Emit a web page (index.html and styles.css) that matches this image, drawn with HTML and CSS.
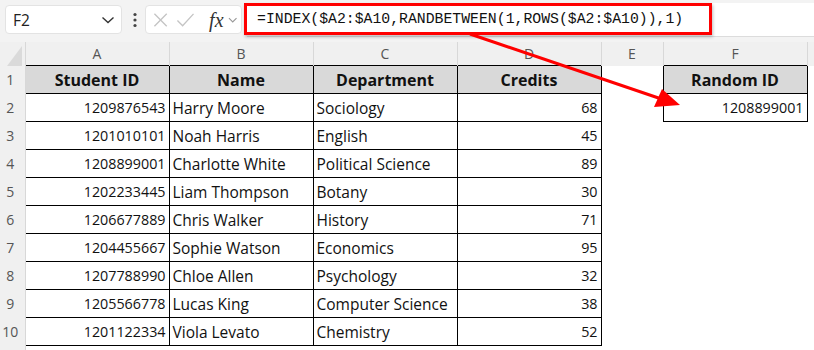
FILE: index.html
```html
<!DOCTYPE html>
<html>
<head>
<meta charset="utf-8">
<link rel="stylesheet" href="styles.css">
</head>
<body>
<div class="app">
  <div class="toolbar">
    <div class="namebox">
      <span class="cellref">F2</span>
      <svg class="chev" width="14" height="8" viewBox="0 0 14 8"><path d="M1.5 1.5 L7 6.5 L12.5 1.5" fill="none" stroke="#333" stroke-width="1.4"/></svg>
    </div>
    <svg class="dots" width="6" height="16" viewBox="0 0 6 16"><circle cx="3" cy="2.5" r="1.6" fill="#444"/><circle cx="3" cy="8" r="1.6" fill="#444"/><circle cx="3" cy="13.5" r="1.6" fill="#444"/></svg>
    <div class="fxbox">
      <svg class="ico" width="16" height="16" viewBox="0 0 16 16"><path d="M1.5 1.5 L14.5 14.5 M14.5 1.5 L1.5 14.5" stroke="#c4c4c4" stroke-width="1.4" fill="none"/></svg>
      <svg class="ico" width="20" height="16" viewBox="0 0 20 16"><path d="M1.5 8.5 L7 14 L18.5 1.5" stroke="#c4c4c4" stroke-width="1.4" fill="none"/></svg>
      <span class="fx">fx</span>
      <svg class="chev-sm" width="10" height="6" viewBox="0 0 10 6"><path d="M1 1 L5 5 L9 1" fill="none" stroke="#999" stroke-width="1.2"/></svg>
    </div>
    <div class="formula">
      <div class="formula-box">=INDEX($A2:$A10,RANDBETWEEN(1,ROWS($A2:$A10)),1)</div>
    </div>
  </div>
  <table class="sheet">
    <colgroup>
      <col class="c-rh"><col class="c-w"><col class="c-w"><col class="c-w"><col class="c-w"><col class="c-e"><col class="c-w"><col class="c-rest">
    </colgroup>
    <thead>
      <tr class="colhead">
        <th class="corner"></th><th>A</th><th>B</th><th>C</th><th>D</th><th>E</th><th>F</th><th></th>
      </tr>
    </thead>
    <tbody>
      <tr><th class="rh">1</th><td class="hd">Student ID</td><td class="hd">Name</td><td class="hd">Department</td><td class="hd">Credits</td><td class="blank"></td><td class="hd">Random ID</td><td class="blank"></td></tr>
      <tr><th class="rh">2</th><td class="num">1209876543</td><td class="txt">Harry Moore</td><td class="txt">Sociology</td><td class="num">68</td><td class="blank"></td><td class="num">1208899001</td><td class="blank"></td></tr>
      <tr><th class="rh">3</th><td class="num">1201010101</td><td class="txt">Noah Harris</td><td class="txt">English</td><td class="num">45</td><td class="blank"></td><td class="blank"></td><td class="blank"></td></tr>
      <tr><th class="rh">4</th><td class="num">1208899001</td><td class="txt">Charlotte White</td><td class="txt">Political Science</td><td class="num">89</td><td class="blank"></td><td class="blank"></td><td class="blank"></td></tr>
      <tr><th class="rh">5</th><td class="num">1202233445</td><td class="txt">Liam Thompson</td><td class="txt">Botany</td><td class="num">30</td><td class="blank"></td><td class="blank"></td><td class="blank"></td></tr>
      <tr><th class="rh">6</th><td class="num">1206677889</td><td class="txt">Chris Walker</td><td class="txt">History</td><td class="num">71</td><td class="blank"></td><td class="blank"></td><td class="blank"></td></tr>
      <tr><th class="rh">7</th><td class="num">1204455667</td><td class="txt">Sophie Watson</td><td class="txt">Economics</td><td class="num">95</td><td class="blank"></td><td class="blank"></td><td class="blank"></td></tr>
      <tr><th class="rh">8</th><td class="num">1207788990</td><td class="txt">Chloe Allen</td><td class="txt">Psychology</td><td class="num">32</td><td class="blank"></td><td class="blank"></td><td class="blank"></td></tr>
      <tr><th class="rh">9</th><td class="num">1205566778</td><td class="txt">Lucas King</td><td class="txt">Computer Science</td><td class="num">38</td><td class="blank"></td><td class="blank"></td><td class="blank"></td></tr>
      <tr><th class="rh">10</th><td class="num">1201122334</td><td class="txt">Viola Levato</td><td class="txt">Chemistry</td><td class="num">52</td><td class="blank"></td><td class="blank"></td><td class="blank"></td></tr>
      <tr><th class="rh"></th><td class="blank"></td><td class="blank"></td><td class="blank"></td><td class="blank"></td><td class="blank"></td><td class="blank"></td><td class="blank"></td></tr>
    </tbody>
  </table>
  <svg class="arrow" width="814" height="350" viewBox="0 0 814 350">
    <line x1="470" y1="34" x2="660" y2="98.5" stroke="#f00" stroke-width="3"/>
    <polygon points="680,105 654,107 662,89" fill="#f00"/>
  </svg>
</div>
</body>
</html>
```
FILE: styles.css
```css
html, body {
  margin: 0;
  padding: 0;
  background: #fff;
}
body {
  width: 814px;
  height: 350px;
  overflow: hidden;
}
.app {
  position: relative;
  width: 814px;
  height: 350px;
  overflow: hidden;
  font-family: "Open Sans", "Liberation Sans", sans-serif;
}
.toolbar {
  height: 42px;
  background: #f3f3f3;
  display: flex;
  align-items: flex-start;
  box-sizing: border-box;
  padding-top: 5px;
}
.namebox {
  margin-left: 5px;
  width: 117px;
  height: 29px;
  box-sizing: border-box;
  background: #fff;
  border: 1px solid #e3e3e3;
  border-radius: 4px;
  display: flex;
  align-items: center;
  justify-content: space-between;
  padding: 0 6px 0 7px;
}
.cellref {
  font-family: "Open Sans", "Liberation Sans", sans-serif;
  font-size: 15.5px;
  color: #222;
}
.dots {
  margin: 7px 0 0 10px;
}
.fxbox {
  margin-left: 7px;
  width: 97px;
  height: 29px;
  box-sizing: border-box;
  background: #fff;
  border: 1px solid #e3e3e3;
  border-radius: 4px;
  display: flex;
  align-items: center;
  padding: 0 4px 0 7px;
  gap: 8px;
}
.fx {
  font-family: "Liberation Serif", serif;
  font-style: italic;
  font-size: 20px;
  color: #333;
  margin-left: 6px;
  line-height: 1;
}
.chev-sm {
  margin-left: -4px;
}
.formula {
  margin-left: 5px;
  margin-top: -2px;
  flex: 1;
  height: 33px;
  background: #fff;
  border-bottom: 1px solid #dcdcdc;
}
.formula-box {
  width: 468px;
  height: 32px;
  box-sizing: border-box;
  border: 3px solid #f00;
  margin-left: -3px;
  padding-left: 10px;
  font-family: "Liberation Mono", monospace;
  font-size: 14.8px;
  line-height: 26px;
  color: #111;
  box-shadow: 1px 2px 3px rgba(0,0,0,0.25);
  white-space: nowrap;
}
.sheet {
  border-collapse: collapse;
  table-layout: fixed;
  width: 814px;
}
.c-rh { width: 25px; }
.c-w { width: 144px; }
.c-e { width: 62px; }
.c-rest { width: 7px; }
.colhead th {
  height: 23px;
  padding: 0;
  background: #f0f0f0;
  border-right: 1px solid #d8d8d8;
  font-weight: 400;
  font-size: 14px;
  color: #555;
  text-align: center;
  vertical-align: middle;
  font-family: "Open Sans", "Liberation Sans", sans-serif;
}
.corner {
  position: relative;
}
.corner::after {
  content: "";
  position: absolute;
  right: 3px;
  bottom: 0;
  width: 0;
  height: 0;
  border-left: 15px solid transparent;
  border-bottom: 20px solid #dadada;
}
tbody tr {
  height: 28px;
}
.rh {
  padding: 0 4px 0 0;
  background: #f0f0f0;
  border-right: 1px solid #d8d8d8;
  font-weight: 400;
  font-size: 14px;
  color: #555;
  text-align: center;
  vertical-align: middle;
}
td {
  padding: 0 3px;
  white-space: nowrap;
  overflow: hidden;
  color: #111;
  vertical-align: middle;
}
.hd, .num, .txt {
  border: 1px solid #000;
}
.hd {
  background: #d9d9d9;
  font-weight: 700;
  font-size: 16px;
  text-align: center;
}
.num {
  font-size: 14.3px;
  text-align: right;
}
.txt {
  font-size: 15.5px;
  text-align: left;
}
.blank {
  background: #fff;
}
.arrow {
  position: absolute;
  left: 0;
  top: 0;
  pointer-events: none;
}
```
